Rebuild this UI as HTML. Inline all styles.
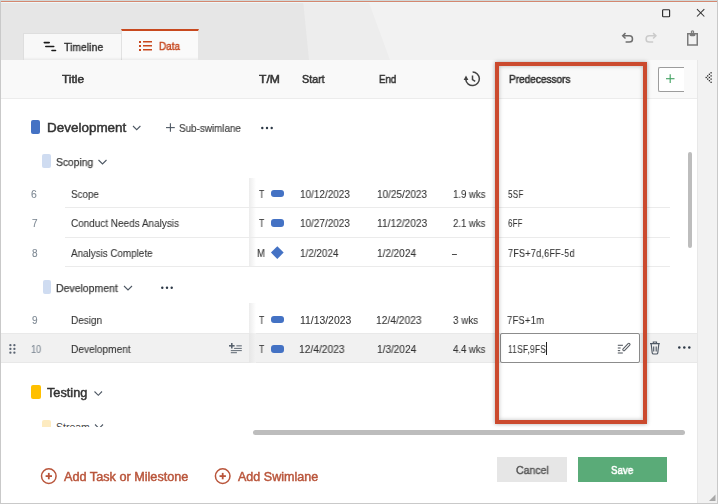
<!DOCTYPE html>
<html><head><meta charset="utf-8">
<style>
*{margin:0;padding:0;box-sizing:border-box}
html,body{width:718px;height:504px;overflow:hidden;background:#fff}
body{position:relative;font-family:"Liberation Sans",sans-serif;color:#333}
.a{position:absolute}
.t{position:absolute;white-space:nowrap;line-height:20px;height:20px;transform-origin:0 50%;will-change:transform}
.div{position:absolute;height:1px;background:#ebebeb}
svg{position:absolute;overflow:visible}
</style></head><body>


<!-- window frame / top bar -->
<div class="a" style="left:0;top:0;width:718px;height:60px;background:#e6e6e6"></div>
<svg style="left:0;top:0" width="718" height="60">
  <polygon points="303,0 718,0 718,60 309,60" fill="#ededed"/>
  <polygon points="368,0 718,0 718,60 390,60" fill="#f2f2f2"/>
</svg>
<div class="a" style="left:0;top:0;width:718px;height:1px;background:#d2d8d8"></div>
<div class="a" style="left:1px;top:1px;width:716px;height:1px;background:#d5876f"></div>
<div class="a" style="left:1px;top:2px;width:716px;height:1px;background:#eef7f8"></div>

<!-- tabs -->
<div class="a" style="left:23px;top:33px;width:98px;height:27px;background:#f8f8f8;border-left:1px solid #dedede;border-top:1px solid #dedede"></div>
<svg style="left:0;top:0" width="200" height="60">
  <g stroke="#1a1a1a" stroke-width="1.6" stroke-linecap="round">
    <line x1="44.3" y1="42.6" x2="49.2" y2="42.6"/>
    <line x1="45.8" y1="46.5" x2="53.7" y2="46.5"/>
    <line x1="52" y1="50.5" x2="55.5" y2="50.5"/>
  </g>
</svg>

<div class="a" style="left:121px;top:29px;width:78px;height:31px;background:#fafafa;border-left:1px solid #e2e2e2;border-right:1px solid #e6e6e6;border-top:2px solid #c8491f"></div>
<svg style="left:0;top:0" width="200" height="60">
  <g fill="#c8491f">
    <rect x="139" y="41" width="2" height="2"/><rect x="139" y="45" width="2" height="2"/><rect x="139" y="49" width="2" height="2"/>
    <rect x="143" y="41" width="9" height="1.5"/><rect x="143" y="45" width="9" height="1.5"/><rect x="143" y="49" width="9" height="1.5"/>
  </g>
</svg>

<div class="a" style="left:24px;top:57px;width:174px;height:3px;background:linear-gradient(to bottom,rgba(0,0,0,0),rgba(0,0,0,0.06))"></div>
<!-- window buttons -->
<svg style="left:0;top:0" width="718" height="60">
  <rect x="662.6" y="9.7" width="7" height="7" rx="0.8" fill="none" stroke="#2a2a2a" stroke-width="1.15"/>
  <g stroke="#333" stroke-width="1.05"><line x1="697" y1="9.2" x2="704.3" y2="16.5"/><line x1="704.3" y1="9.2" x2="697" y2="16.5"/></g>
  <g fill="none" stroke="#6f6f6f" stroke-width="1.5">
    <path d="M623 35.8 H629.4 A3.1 3.1 0 0 1 629.4 42 H625.6"/>
    <path d="M625.5 33.1 L622.7 35.8 L625.5 38.5"/>
  </g>
  <g fill="none" stroke="#cbcbcb" stroke-width="1.5">
    <path d="M655.5 35.8 H649.2 A3.1 3.1 0 0 0 649.2 42 H653.2"/>
    <path d="M653.1 33.1 L655.9 35.8 L653.1 38.5"/>
  </g>
  <g fill="none" stroke="#7a7a7a" stroke-width="1.5">
    <rect x="687.75" y="33.75" width="9.5" height="11.25"/>
  </g>
  <path d="M689.8 33 V35.2 L690.8 36.2 H694.2 L695.2 35.2 V33 Z" fill="#7a7a7a"/>
  <circle cx="692.5" cy="32.1" r="1.25" fill="none" stroke="#7a7a7a" stroke-width="1.1"/>
</svg>

<!-- right panel -->
<div class="a" style="left:697px;top:60px;width:21px;height:444px;background:#f2f2f2;border-left:1px solid #e8e8e8"></div>
<svg style="left:0;top:0" width="718" height="504">
  <g fill="#262626"><rect x="710.45" y="72.15" width="1.3" height="1.3"/><rect x="708.75" y="73.65" width="1.3" height="1.3"/><rect x="707.05" y="75.25" width="1.3" height="1.3"/><rect x="710.45" y="75.25" width="1.3" height="1.3"/><rect x="705.55" y="76.85" width="1.3" height="1.3"/><rect x="708.75" y="76.85" width="1.3" height="1.3"/><rect x="707.05" y="78.45" width="1.3" height="1.3"/><rect x="710.45" y="78.45" width="1.3" height="1.3"/><rect x="708.75" y="80.05" width="1.3" height="1.3"/><rect x="710.45" y="81.65" width="1.3" height="1.3"/></g>
  <polygon points="709,501 715.5,494.5 715.5,501" fill="#a8a8a8"/>
</svg>

<!-- header -->
<div class="a" style="left:1px;top:60px;width:696px;height:39px;background:#f9f9f9;border-bottom:1px solid #ececec"></div>
<svg style="left:0;top:0" width="718" height="100">
  <g fill="none" stroke="#444" stroke-width="1.5">
    <path d="M472.6 72 A6.8 6.8 0 1 1 465.8 79.6"/>
    <path d="M472.5 75.5 V79.5 L475.2 81.3"/>
  </g>
  <polygon points="463.6,80 466,75.6 468.4,80" fill="#444"/>
</svg>
<div class="a" style="left:658px;top:67px;width:30px;height:25px;background:#fff;border:1px solid #9c9c9c;border-right:none;border-radius:2px 0 0 2px"></div>
<div class="a" style="left:684px;top:66px;width:13px;height:27px;background:#f9f9f9"></div>
<svg style="left:0;top:0" width="718" height="100">
  <g stroke="#47a466" stroke-width="1.15"><line x1="666" y1="78.7" x2="674.5" y2="78.7"/><line x1="670.2" y1="74.3" x2="670.2" y2="83"/></g>
</svg>

<!-- left / bottom / right frame -->
<div class="a" style="left:0;top:1px;width:1px;height:503px;background:#c9c9c9"></div>
<div class="a" style="left:0;top:503px;width:718px;height:1px;background:#c9c9c9"></div>
<div class="a" style="left:717px;top:0;width:1px;height:504px;background:#c9c9c9"></div>

<!-- Development lane -->
<div class="a" style="left:31px;top:120px;width:9px;height:14px;background:#4472c4;border-radius:2px"></div>
<svg style="left:0;top:0" width="718" height="504">
  <g fill="none" stroke="#4e5864" stroke-width="1.1">
    <polyline points="133,126 136.7,129.7 140.4,126"/>
  </g>
  <g stroke="#4e5864" stroke-width="1.1"><line x1="166" y1="127.6" x2="174.8" y2="127.6"/><line x1="170.4" y1="123.3" x2="170.4" y2="131.8"/></g>
  <g fill="#2c3846"><circle cx="262.3" cy="128" r="1.2"/><circle cx="267" cy="128" r="1.2"/><circle cx="271.7" cy="128" r="1.2"/></g>
</svg>

<!-- Scoping -->
<div class="a" style="left:42px;top:154px;width:9px;height:14px;background:#cfdcf1;border-radius:2px"></div>
<svg style="left:0;top:0" width="718" height="504">
  <g fill="none" stroke="#4e5864" stroke-width="1.1"><polyline points="98.5,160 102.5,164 106.5,160"/></g>
</svg>

<!-- table column divider -->
<div class="a" style="left:249px;top:178px;width:7px;height:89px;background:linear-gradient(to right,#ececec,#fff)"></div>
<div class="a" style="left:249px;top:303px;width:7px;height:60px;background:linear-gradient(to right,#ececec,rgba(255,255,255,0))"></div>

<!-- rows -->
<div class="div" style="left:65px;top:207px;width:605px"></div>
<div class="div" style="left:65px;top:237px;width:605px"></div>
<div class="div" style="left:65px;top:266px;width:605px"></div>

<div class="a" style="left:271px;top:189.5px;width:13px;height:7.5px;background:#4472c4;border-radius:3px"></div>

<div class="a" style="left:271px;top:219px;width:13px;height:7.5px;background:#4472c4;border-radius:3px"></div>

<div class="a" style="left:273px;top:248px;width:8.6px;height:8.6px;background:#4472c4;transform:rotate(45deg)"></div>

<!-- Development sub lane -->
<div class="a" style="left:42.5px;top:280px;width:8.5px;height:13.5px;background:#cfdcf1;border-radius:2px"></div>
<svg style="left:0;top:0" width="718" height="504">
  <g fill="none" stroke="#4e5864" stroke-width="1.1"><polyline points="124,286 128,290 132,286"/></g>
  <g fill="#2c3846"><circle cx="162.3" cy="287.8" r="1.2"/><circle cx="167" cy="287.8" r="1.2"/><circle cx="171.7" cy="287.8" r="1.2"/></g>
</svg>

<!-- row 9 -->
<div class="div" style="left:65px;top:333px;width:605px"></div>
<div class="a" style="left:271px;top:315.5px;width:13px;height:7.5px;background:#4472c4;border-radius:3px"></div>

<!-- row 10 highlighted -->
<div class="a" style="left:1px;top:333px;width:696px;height:30px;background:#f1f1f1;border-top:1px solid #e9e9e9;border-bottom:1px solid #e8e8e8"></div>
<div class="a" style="left:249px;top:333px;width:7px;height:30px;background:linear-gradient(to right,#e6e6e6,#f2f2f2)"></div>
<svg style="left:0;top:0" width="718" height="504">
  <g fill="#5a6472"><circle cx="10.4" cy="345.2" r="1.15"/><circle cx="14.4" cy="345.2" r="1.15"/><circle cx="10.4" cy="348.95" r="1.15"/><circle cx="14.4" cy="348.95" r="1.15"/><circle cx="10.4" cy="352.7" r="1.15"/><circle cx="14.4" cy="352.7" r="1.15"/></g>
  <g stroke="#525c68">
    <line x1="229" y1="345.8" x2="234.6" y2="345.8" stroke-width="1.5"/><line x1="231.8" y1="343" x2="231.8" y2="348.6" stroke-width="1.5"/>
    <line x1="236.4" y1="345.8" x2="241.8" y2="345.8" stroke-width="1.3" stroke-opacity="0.75"/>
    <line x1="234.1" y1="348.4" x2="241.8" y2="348.4" stroke-width="0.9"/>
    <line x1="230.8" y1="350.6" x2="241.8" y2="350.6" stroke-width="0.9"/>
    <line x1="230.8" y1="352.6" x2="236.9" y2="352.6" stroke-width="1.3" stroke-opacity="0.75"/>
  </g>
</svg>
<div class="a" style="left:271px;top:345px;width:13px;height:7.5px;background:#4472c4;border-radius:3px"></div>

<!-- input -->
<div class="a" style="left:500px;top:333px;width:140px;height:30px;background:#fff;border:1px solid #8c8c8c;border-radius:2px"></div>
<div class="a" style="left:545.5px;top:342px;width:1px;height:13px;background:#222"></div>
<svg style="left:0;top:0" width="718" height="504">
  <g stroke="#5a5f66" stroke-width="1.1" fill="none">
    <line x1="617.8" y1="345.3" x2="622.9" y2="345.3"/>
    <line x1="617.8" y1="348" x2="620.6" y2="348"/>
    <line x1="617.8" y1="350.6" x2="620.2" y2="350.6"/>
    <line x1="617.8" y1="353" x2="622.8" y2="353"/>
  </g>
  <line x1="623.9" y1="349.6" x2="628.9" y2="344.4" stroke="#5a5f66" stroke-width="3.3" stroke-linecap="round"/>
  <line x1="623.9" y1="349.6" x2="628.9" y2="344.4" stroke="#fff" stroke-width="1.1" stroke-linecap="round"/>
  <g stroke="#505a66" stroke-width="1.15" fill="none">
    <path d="M650 343.6 H659.8 M653.3 343.6 V342 H656.5 V343.6 M651.2 344 L652.2 352.8 Q652.4 354 653.5 354 H656.5 Q657.6 354 657.8 352.8 L658.8 344 M653.7 346.5 V351.6 M656.2 346.5 V351.6"/>
  </g>
  <g fill="#2c3846"><circle cx="679.3" cy="347.5" r="1.25"/><circle cx="684.3" cy="347.5" r="1.25"/><circle cx="689.3" cy="347.5" r="1.25"/></g>
</svg>

<!-- Testing lane -->
<div class="a" style="left:31px;top:385px;width:9.5px;height:14px;background:#ffc000;border-radius:2px"></div>
<svg style="left:0;top:0" width="718" height="504">
  <g fill="none" stroke="#4e5864" stroke-width="1.1"><polyline points="94.5,391.5 98.3,395.3 102,391.5"/></g>
</svg>
<div class="a" style="left:0;top:419px;width:250px;height:8px;overflow:hidden">
  <div class="a" style="left:42px;top:0.5px;width:9px;height:12px;background:#fdebc0;border-radius:2px"></div>
  <div class="a" style="left:56px;top:-2px;font-size:10.5px;line-height:20px;white-space:nowrap;color:#444">Stream</div>
  <svg style="left:0;top:0" width="250" height="20"><polyline points="95,5.5 99,9.5 103,5.5" fill="none" stroke="#4e5864" stroke-width="1.1"/></svg>
</div>

<!-- red highlight box -->
<div class="a" style="left:495px;top:62px;width:152px;height:362px;border:4px solid #cb4a2e;box-shadow:0 0 4px rgba(0,0,0,0.33), inset 0 0 4px rgba(0,0,0,0.26)"></div>

<!-- scrollbars -->
<div class="a" style="left:688px;top:151.5px;width:4.1px;height:96.5px;background:#bdbdbd;border-radius:2px"></div>
<div class="a" style="left:252.5px;top:430px;width:432.5px;height:5px;background:#bdbdbd;border-radius:2.5px"></div>

<!-- footer actions -->
<svg style="left:0;top:0" width="718" height="504">
  <g fill="none" stroke="#b9553b" stroke-width="1.5">
    <circle cx="48.8" cy="476.1" r="7.3"/>
    <line x1="45.6" y1="476.1" x2="52" y2="476.1" stroke-width="1.8"/><line x1="48.8" y1="472.9" x2="48.8" y2="479.3" stroke-width="1.8"/>
    <circle cx="222.7" cy="476.1" r="7.3"/>
    <line x1="219.5" y1="476.1" x2="225.9" y2="476.1" stroke-width="1.8"/><line x1="222.7" y1="472.9" x2="222.7" y2="479.3" stroke-width="1.8"/>
  </g>
</svg>

<div class="a" style="left:497px;top:457px;width:70px;height:25px;background:#e6e6e6"></div>
<div class="a" style="left:578px;top:457px;width:89px;height:25px;background:#5aab78"></div>


<div class="t" style="left:63.70px;top:37px;font-size:10.8px;color:#2a2a2a;-webkit-text-stroke:0.3px #2a2a2a;transform:scaleX(0.9675);">Timeline</div>
<div class="t" style="left:159.40px;top:36px;font-size:10.8px;color:#c5471f;-webkit-text-stroke:0.4px #c5471f;transform:scaleX(0.9217);">Data</div>
<div class="t" style="left:62.00px;top:69px;font-size:10.8px;color:#333333;-webkit-text-stroke:0.5px #333333;transform:scaleX(1.1000);">Title</div>
<div class="t" style="left:258.80px;top:69px;font-size:10.8px;color:#333333;-webkit-text-stroke:0.5px #333333;transform:scaleX(1.1222);">T/M</div>
<div class="t" style="left:301.60px;top:69px;font-size:10.8px;color:#333333;-webkit-text-stroke:0.5px #333333;transform:scaleX(0.9913);">Start</div>
<div class="t" style="left:378.80px;top:69px;font-size:10.8px;color:#333333;-webkit-text-stroke:0.5px #333333;transform:scaleX(0.8947);">End</div>
<div class="t" style="left:508.70px;top:69px;font-size:10.8px;color:#333333;-webkit-text-stroke:0.5px #333333;transform:scaleX(0.9318);">Predecessors</div>
<div class="t" style="left:47.20px;top:117.5px;font-size:12.4px;color:#333;-webkit-text-stroke:0.45px #333;transform:scaleX(1.0863);">Development</div>
<div class="t" style="left:179.13px;top:118px;font-size:10.5px;color:#444;-webkit-text-stroke:0.2px #444;transform:scaleX(0.9394);">Sub-swimlane</div>
<div class="t" style="left:55.80px;top:151.5px;font-size:10.8px;color:#3c3c3c;-webkit-text-stroke:0.25px #3c3c3c;transform:scaleX(0.9538);">Scoping</div>
<div class="t" style="left:30.88px;top:185px;font-size:10px;color:#7d8893;-webkit-text-stroke:0.1px #7d8893;transform:scaleX(1.0400);">6</div>
<div class="t" style="left:71.23px;top:185px;font-size:10.4px;color:#333;-webkit-text-stroke:0.08px #333;transform:scaleX(0.9414);">Scope</div>
<div class="t" style="left:258.60px;top:185px;font-size:10px;color:#333;-webkit-text-stroke:0.1px #333;transform:scaleX(0.8667);">T</div>
<div class="t" style="left:300.20px;top:185px;font-size:10.4px;color:#333;-webkit-text-stroke:0.08px #333;transform:scaleX(0.9577);">10/12/2023</div>
<div class="t" style="left:376.80px;top:185px;font-size:10.4px;color:#333;-webkit-text-stroke:0.08px #333;transform:scaleX(0.9615);">10/25/2023</div>
<div class="t" style="left:453.00px;top:185px;font-size:10.4px;color:#333;-webkit-text-stroke:0.08px #333;transform:scaleX(0.9229);">1.9 wks</div>
<div class="t" style="left:507.70px;top:185px;font-size:10.4px;color:#333;-webkit-text-stroke:0.08px #333;letter-spacing:0.35px;transform:scaleX(0.7700);">5SF</div>
<div class="t" style="left:31.50px;top:214px;font-size:10px;color:#7d8893;-webkit-text-stroke:0.1px #7d8893;">7</div>
<div class="t" style="left:71.22px;top:214px;font-size:10.4px;color:#333;-webkit-text-stroke:0.08px #333;transform:scaleX(0.9584);">Conduct Needs Analysis</div>
<div class="t" style="left:258.60px;top:214px;font-size:10px;color:#333;-webkit-text-stroke:0.1px #333;transform:scaleX(0.8667);">T</div>
<div class="t" style="left:300.20px;top:214px;font-size:10.4px;color:#333;-webkit-text-stroke:0.08px #333;transform:scaleX(0.9577);">10/27/2023</div>
<div class="t" style="left:376.90px;top:214px;font-size:10.4px;color:#333;-webkit-text-stroke:0.08px #333;transform:scaleX(0.9804);">11/12/2023</div>
<div class="t" style="left:453.20px;top:214px;font-size:10.4px;color:#333;-webkit-text-stroke:0.08px #333;transform:scaleX(0.9200);">2.1 wks</div>
<div class="t" style="left:507.70px;top:214px;font-size:10.4px;color:#333;-webkit-text-stroke:0.08px #333;letter-spacing:0.35px;transform:scaleX(0.7526);">6FF</div>
<div class="t" style="left:31.50px;top:243.5px;font-size:10px;color:#7d8893;-webkit-text-stroke:0.1px #7d8893;">8</div>
<div class="t" style="left:71.23px;top:243.5px;font-size:10.4px;color:#333;-webkit-text-stroke:0.08px #333;transform:scaleX(0.9477);">Analysis Complete</div>
<div class="t" style="left:257.42px;top:243.5px;font-size:10px;color:#333;-webkit-text-stroke:0.1px #333;transform:scaleX(0.9375);">M</div>
<div class="t" style="left:300.20px;top:243.5px;font-size:10.4px;color:#333;-webkit-text-stroke:0.08px #333;transform:scaleX(0.9488);">1/2/2024</div>
<div class="t" style="left:376.90px;top:243.5px;font-size:10.4px;color:#333;-webkit-text-stroke:0.08px #333;transform:scaleX(0.9634);">1/2/2024</div>
<div class="t" style="left:451.70px;top:243.5px;font-size:10.4px;color:#333;-webkit-text-stroke:0.08px #333;transform:scaleX(0.8333);">–</div>
<div class="t" style="left:507.70px;top:243.5px;font-size:10.4px;color:#333;-webkit-text-stroke:0.08px #333;letter-spacing:0.35px;transform:scaleX(0.8610);">7FS+7d,6FF-5d</div>
<div class="t" style="left:31.50px;top:310.5px;font-size:10px;color:#7d8893;-webkit-text-stroke:0.1px #7d8893;">9</div>
<div class="t" style="left:71.22px;top:310.5px;font-size:10.4px;color:#333;-webkit-text-stroke:0.08px #333;transform:scaleX(0.9625);">Design</div>
<div class="t" style="left:258.60px;top:310.5px;font-size:10px;color:#333;-webkit-text-stroke:0.1px #333;transform:scaleX(0.8667);">T</div>
<div class="t" style="left:299.50px;top:310.5px;font-size:10.4px;color:#333;-webkit-text-stroke:0.08px #333;">11/13/2023</div>
<div class="t" style="left:376.40px;top:310.5px;font-size:10.4px;color:#333;-webkit-text-stroke:0.08px #333;transform:scaleX(0.9848);">12/4/2023</div>
<div class="t" style="left:453.20px;top:310.5px;font-size:10.4px;color:#333;-webkit-text-stroke:0.08px #333;transform:scaleX(0.9462);">3 wks</div>
<div class="t" style="left:507.20px;top:310.5px;font-size:10.4px;color:#333;-webkit-text-stroke:0.08px #333;letter-spacing:0.35px;transform:scaleX(0.8951);">7FS+1m</div>
<div class="t" style="left:31.24px;top:340px;font-size:10px;color:#7d8893;-webkit-text-stroke:0.1px #7d8893;transform:scaleX(0.9182);">10</div>
<div class="t" style="left:71.21px;top:340px;font-size:10.4px;color:#333;-webkit-text-stroke:0.08px #333;transform:scaleX(0.9754);">Development</div>
<div class="t" style="left:258.60px;top:340px;font-size:10px;color:#333;-webkit-text-stroke:0.1px #333;transform:scaleX(0.8667);">T</div>
<div class="t" style="left:299.40px;top:340px;font-size:10.4px;color:#333;-webkit-text-stroke:0.08px #333;transform:scaleX(0.9848);">12/4/2023</div>
<div class="t" style="left:376.70px;top:340px;font-size:10.4px;color:#333;-webkit-text-stroke:0.08px #333;transform:scaleX(0.9683);">1/3/2024</div>
<div class="t" style="left:453.00px;top:340px;font-size:10.4px;color:#333;-webkit-text-stroke:0.08px #333;transform:scaleX(0.9200);">4.4 wks</div>
<div class="t" style="left:508.00px;top:340px;font-size:10.4px;color:#333;-webkit-text-stroke:0.08px #333;letter-spacing:0.35px;transform:scaleX(0.8000);">11SF,9FS</div>
<div class="t" style="left:56.00px;top:277.5px;font-size:10.8px;color:#3c3c3c;-webkit-text-stroke:0.25px #3c3c3c;transform:scaleX(0.9734);">Development</div>
<div class="t" style="left:47.30px;top:382.5px;font-size:12.4px;color:#333;-webkit-text-stroke:0.45px #333;transform:scaleX(1.0282);">Testing</div>
<div class="t" style="left:64.00px;top:466.7px;font-size:12.4px;color:#b9553b;-webkit-text-stroke:0.45px #b9553b;transform:scaleX(1.0221);">Add Task or Milestone</div>
<div class="t" style="left:238.00px;top:466.7px;font-size:12.4px;color:#b9553b;-webkit-text-stroke:0.45px #b9553b;transform:scaleX(1.0114);">Add Swimlane</div>
<div class="t" style="left:516.00px;top:459.5px;font-size:10.8px;color:#555;-webkit-text-stroke:0.4px #555;transform:scaleX(0.9758);">Cancel</div>
<div class="t" style="left:611.27px;top:459.5px;font-size:11.3px;color:#fff;-webkit-text-stroke:0.55px #fff;transform:scaleX(0.8654);">Save</div>

</body></html>
